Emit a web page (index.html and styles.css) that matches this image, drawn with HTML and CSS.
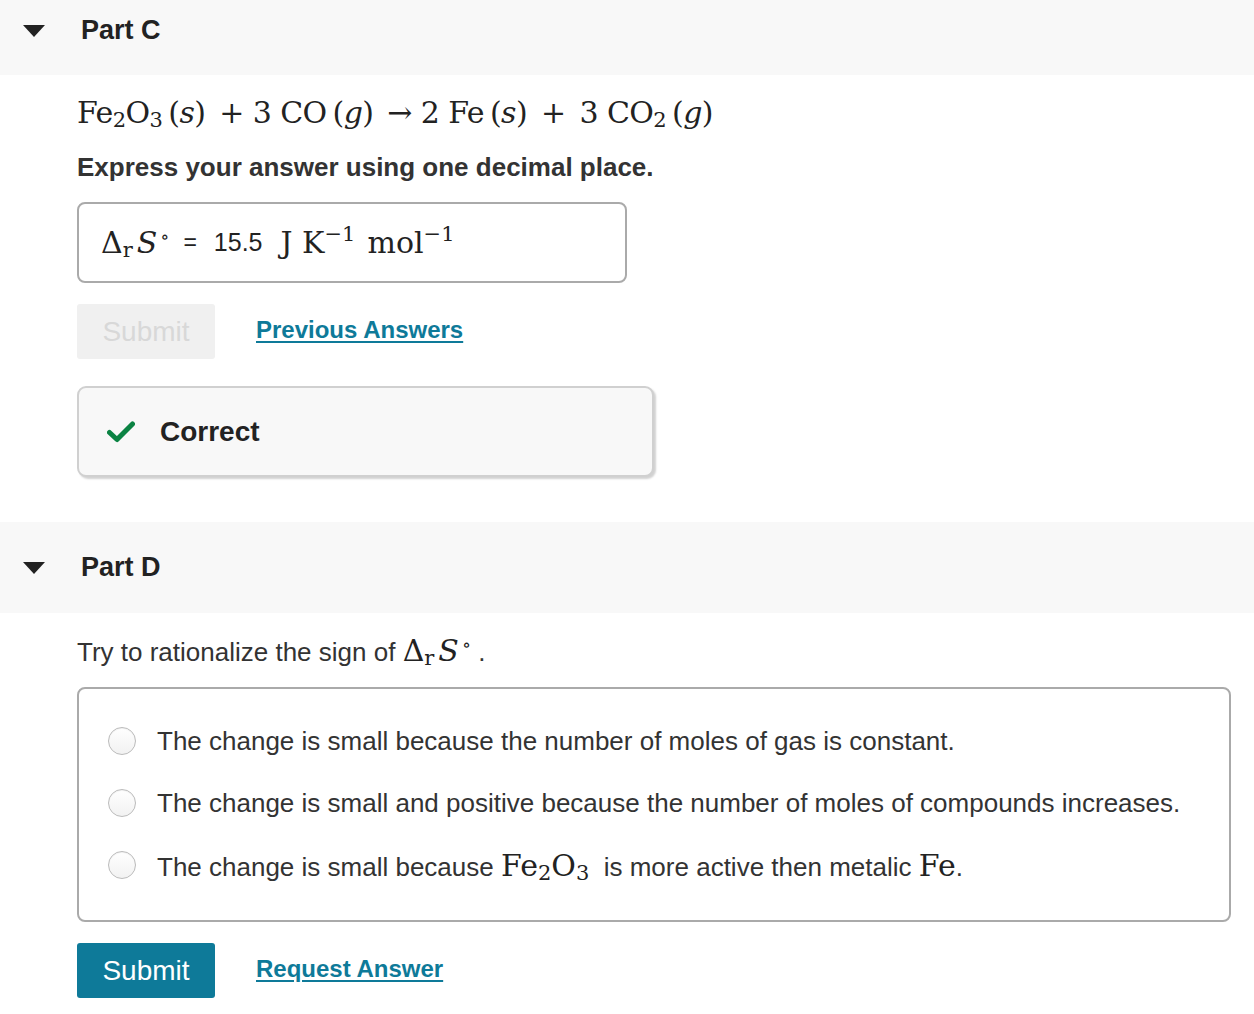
FILE: index.html
```html
<!DOCTYPE html>
<html>
<head>
<meta charset="utf-8">
<link rel="stylesheet" href="styles.css">
</head>
<body>
<section class="part">
  <header class="part-head part-head-c">
    <span class="caret"></span>
    <h2 class="part-title">Part C</h2>
  </header>
  <div class="part-body">
    <p class="equation"><span class="m">Fe<sub>2</sub>O<sub>3</sub></span><span class="sp1"></span><span class="m">(<i>s</i>)</span><span class="sp2"></span><span class="m">+ 3 CO</span><span class="sp1"></span><span class="m">(<i>g</i>)</span><span class="sp2"></span><span class="m">→ 2 Fe</span><span class="sp1"></span><span class="m">(<i>s</i>)</span><span class="sp2"></span><span class="m">+<span class="sp2"></span>3 CO<sub>2</sub></span><span class="sp1"></span><span class="m">(<i>g</i>)</span></p>
    <p class="instruction">Express your answer using one decimal place.</p>
    <div class="answer-box">
      <span class="m">Δ<sub>r</sub><span class="sp0"></span><i>S</i><sup class="deg">∘</sup></span>
      <span class="eq">=</span>
      <span class="num">15.5</span>
      <span class="m unit">J K<sup>−1</sup><span class="sp3"></span>mol<sup>−1</sup></span>
    </div>
    <div class="actions">
      <button class="btn btn-disabled">Submit</button>
      <a class="link" href="#">Previous Answers</a>
    </div>
    <div class="feedback">
      <svg class="check" width="28" height="22" viewBox="0 0 28 22"><path d="M2.5 11.5 L10 18.5 L25.5 3" fill="none" stroke="#0b8343" stroke-width="5" stroke-linecap="round" stroke-linejoin="round"/></svg>
      <span class="feedback-text">Correct</span>
    </div>
  </div>
</section>
<section class="part part-d">
  <header class="part-head part-head-d">
    <span class="caret"></span>
    <h2 class="part-title">Part D</h2>
  </header>
  <div class="part-body body-d">
    <p class="prompt">Try to rationalize the sign of <span class="m big">Δ<sub>r</sub><span class="sp0"></span><i>S</i><sup class="deg">∘</sup></span> .</p>
    <div class="options">
      <label class="option"><span class="radio"></span><span>The change is small because the number of moles of gas is constant.</span></label>
      <label class="option"><span class="radio"></span><span>The change is small and positive because the number of moles of compounds increases.</span></label>
      <label class="option"><span class="radio"></span><span>The change is small because <span class="m big">Fe<sub>2</sub>O<sub>3</sub></span>&nbsp; is more active then metalic <span class="m big">Fe</span>.</span></label>
    </div>
    <div class="actions actions-d">
      <button class="btn btn-primary">Submit</button>
      <a class="link" href="#">Request Answer</a>
    </div>
  </div>
</section>
</body>
</html>
```

FILE: styles.css
```css
html, body {
  margin: 0;
  padding: 0;
  background: #ffffff;
}
body {
  font-family: "Liberation Sans", Arial, sans-serif;
  color: #333333;
  width: 1254px;
}
p { margin: 0; }

.part-head {
  background: #f8f8f8;
  display: flex;
  align-items: center;
  box-sizing: border-box;
}
.part-head-c {
  height: 75px;
  padding-bottom: 14px;
}
.part-head-d {
  height: 91px;
  margin-top: 45px;
}
.caret {
  width: 0;
  height: 0;
  border-left: 11px solid transparent;
  border-right: 11px solid transparent;
  border-top: 12px solid #222222;
  margin-left: 23px;
  margin-right: 36px;
}
.part-title {
  margin: 0;
  font-size: 27px;
  font-weight: bold;
  color: #222222;
  line-height: 1;
}

.part-body {
  padding-left: 77px;
}
.m {
  font-family: "DejaVu Serif", "Liberation Serif", serif;
}
.m sub, .m sup {
  font-size: 0.7em;
  line-height: 0;
}
.m sub { vertical-align: -0.2em; }
.m sup { vertical-align: 0.55em; }
.sp0 { display: inline-block; width: 4px; }
.sp1 { display: inline-block; width: 6px; }
.sp2 { display: inline-block; width: 14px; }
.sp3 { display: inline-block; width: 12px; }

.equation {
  font-size: 30px;
  color: #222;
  padding-top: 20px;
  height: 54px;
  letter-spacing: -0.6px;
}

.instruction {
  font-size: 26px;
  font-weight: bold;
  color: #333;
  margin-top: 3px;
  line-height: 30px;
}

.answer-box {
  margin-top: 20px;
  width: 550px;
  height: 81px;
  border: 2px solid #aaaaaa;
  border-radius: 8px;
  box-sizing: border-box;
  display: flex;
  align-items: center;
  padding-left: 22px;
  color: #222;
}
.answer-box .m { font-size: 30px; }
.answer-box .eq { font-size: 23px; margin: 0 17px 0 14px; }
.answer-box .num { font-size: 25px; margin-right: 18px; }
.deg { font-size: 0.62em !important; margin-left: 3px; }

.actions {
  display: flex;
  align-items: center;
  margin-top: 21px;
  gap: 41px;
}
.btn {
  width: 138px;
  height: 55px;
  border: none;
  border-radius: 3px;
  font-family: "Liberation Sans", Arial, sans-serif;
  font-size: 28px;
  padding: 0;
}
.btn-disabled {
  background: #f0f0f0;
  color: #d8d8d8;
}
.btn-primary {
  background: #0e7a99;
  color: #ffffff;
}
.link {
  color: #0e7a99;
  font-weight: bold;
  font-size: 24px;
  text-decoration: underline;
  text-underline-offset: 3px;
  text-decoration-thickness: 2px;
  margin-top: -4px;
}

.feedback {
  margin-top: 27px;
  width: 577px;
  height: 91px;
  box-sizing: border-box;
  background: #f8f8f8;
  border: 2px solid #d0d0d0;
  border-radius: 9px;
  box-shadow: 2px 2px 2px rgba(0,0,0,0.18);
  display: flex;
  align-items: center;
  padding-left: 28px;
}
.check { margin-right: 25px; }
.feedback-text {
  font-size: 28px;
  font-weight: bold;
  color: #222;
}

.prompt {
  font-size: 26px;
  color: #333;
  margin-top: 21px;
  line-height: 34px;
}
.m.big { font-size: 30px; color: #222; }

.options {
  margin-top: 18px;
  width: 1154px;
  height: 235px;
  box-sizing: border-box;
  border: 2px solid #aaaaaa;
  border-radius: 8px;
  padding: 35px 0 0 29px;
  display: flex;
  flex-direction: column;
  gap: 28px;
}
.option {
  display: flex;
  align-items: center;
  font-size: 26px;
  color: #333;
  height: 34px;
}
.radio {
  width: 26px;
  height: 26px;
  border-radius: 50%;
  border: 1px solid #bbbbbb;
  background: linear-gradient(#ffffff, #f2f2f2);
  box-shadow: inset 0 1px 1px rgba(0,0,0,0.05);
  margin-right: 21px;
  flex-shrink: 0;
}

.actions-d {
  margin-top: 21px;
}
```
